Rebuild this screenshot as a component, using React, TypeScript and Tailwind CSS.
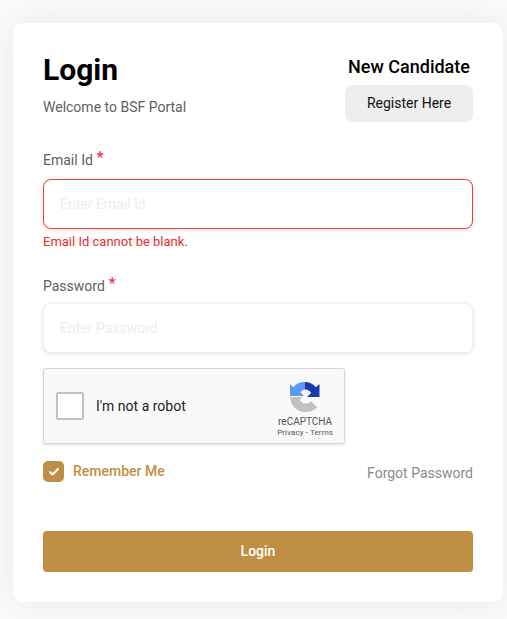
import { Check } from "lucide-react";

function Label({ text }: { text: string }) {
  return (
    <label className="flex h-[18px] items-center text-[14px] leading-[18px] text-[#5f5f5f]">
      {text}
      <span className="ml-[4px] -mt-[4px] text-[16px] text-[#f5284f]">*</span>
    </label>
  );
}

function RecaptchaLogo() {
  return (
    <svg width="32" height="32" viewBox="0 0 32 32" aria-hidden>
      {/* blue corner */}
      <path d="M1 15V3l3.500 3.200C7 3 10 1.200 14 1h2v7.500c-2 0-3.600 1.200-4.400 3.100L15 15H1z" fill="#5a9af5" />
      {/* dark blue arrow */}
      <path d="M16 1c4.600 0 8.400 2 10.800 5.200L30.500 3v13H18l4-4c-1-2-3.200-3.500-6-3.500V1z" fill="#1c3aa9" />
      {/* grey arrow */}
      <path d="M1 16h12.500l-2.800 2.800c1.200 2 3 3.700 5.600 3.700 2.500 0 4.200-.9 5.600-2.300l6.400 6.300C24.800 29.800 20.800 31 16 31 8 31 1.500 24.500 1 16z" fill="#c0c0c0" />
    </svg>
  );
}

function Recaptcha() {
  return (
    <div className="mt-[15px] flex h-[76px] w-[302px] items-center rounded-[3px] border border-[#d6d6d6] bg-[#f9f9f9] pl-[12px] pr-[11px] shadow-[0_1px_3px_rgba(0,0,0,0.12)]">
      <div className="h-[28px] w-[28px] rounded-[2px] border-2 border-[#c1c1c1] bg-white" />
      <span className="ml-[12px] text-[14px] text-[#222]">I'm not a robot</span>
      <div className="ml-auto flex flex-col items-center pt-[7px]">
        <RecaptchaLogo />
        <span className="mt-[2px] text-[10px] leading-[13px] text-[#555]">reCAPTCHA</span>
        <span className="text-[8px] leading-[10px] tracking-[0.1px] text-[#555]">Privacy - Terms</span>
      </div>
    </div>
  );
}

export default function App() {
  return (
    <div
      className="h-[619px] w-[507px] overflow-hidden bg-[#fafafa] pl-[13px] pr-[4px] pt-[23px]"
      style={{ fontFamily: "Roboto, sans-serif" }}
    >
      <div className="h-[579px] rounded-[10px] bg-white px-[30px] pt-[29px] shadow-[0_0_30px_rgba(0,0,0,0.07)]">
        <div className="flex justify-between">
          <div>
            <h1 className="text-[30px] font-bold leading-[36px] text-black">Login</h1>
            <p className="mt-[10px] text-[14px] leading-[18px] text-[#5f5f5f]">Welcome to BSF Portal</p>
          </div>
          <div className="flex flex-col items-center">
            <span className="mt-[3px] text-[18px] font-medium leading-[24px] text-black">New Candidate</span>
            <button className="mt-[6px] h-[37px] w-[128px] rounded-[8px] bg-[#eeeeee] text-[14px] text-[#111]">
              Register Here
            </button>
          </div>
        </div>

        <div className="mt-[29px]">
          <Label text="Email Id" />
          <input
            placeholder="Enter Email Id"
            className="mt-[10px] block h-[50px] w-full rounded-[8px] border border-[#ee3a3a] bg-white px-[16px] text-[14px] shadow-[0_1px_4px_rgba(0,0,0,0.12)] outline-none placeholder:text-[#eeeeee]"
          />
          <p className="mt-[4px] text-[13px] leading-[18px] text-[#ee2c2c]">Email Id cannot be blank.</p>
        </div>

        <div className="mt-[26px]">
          <Label text="Password" />
          <input
            placeholder="Enter Password"
            className="mt-[8px] block h-[50px] w-full rounded-[8px] border border-[#f0f0f0] bg-white px-[16px] text-[14px] shadow-[0_1px_4px_rgba(0,0,0,0.12)] outline-none placeholder:text-[#eeeeee]"
          />
        </div>

        <Recaptcha />

        <div className="mt-[15px] flex items-center justify-between">
          <div className="flex items-center">
            <span className="flex h-[21px] w-[21px] items-center justify-center rounded-[5px] bg-[#bf8f45]">
              <Check size={12} strokeWidth={4} color="#fff" />
            </span>
            <span className="ml-[9px] text-[14px] font-medium text-[#bf8f45]">Remember Me</span>
          </div>
          <a className="mt-[4px] text-[14px] text-[#8a8a8a]">Forgot Password</a>
        </div>

        <button className="mt-[47px] block h-[41px] w-full rounded-[4px] bg-[#bf8f45] text-[14px] font-medium text-white">
          Login
        </button>
      </div>
    </div>
  );
}
